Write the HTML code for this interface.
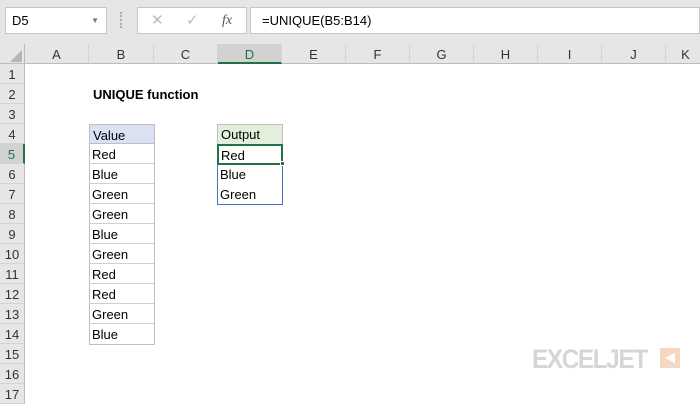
<!DOCTYPE html>
<html><head><style>
body{margin:0;width:700px;height:400px;overflow:hidden;background:#fff;font-family:"Liberation Sans",sans-serif;position:relative}
.a{position:absolute;box-sizing:border-box}
.ch{position:absolute;top:44px;height:20px;border-right:1px solid #d4d4d4;border-bottom:1px solid #bcbcbc;background:#e6e6e6;font-size:13px;color:#333;text-align:center;line-height:21px;box-sizing:border-box}
.rh{position:absolute;left:0;width:25px;height:20px;border-bottom:1px solid #d4d4d4;border-right:1px solid #bcbcbc;background:#e6e6e6;font-size:13px;color:#333;text-align:center;line-height:21px;box-sizing:border-box}
.c{position:absolute;font-size:13px;color:#000;line-height:22px;padding-left:3px;box-sizing:border-box;height:20px}
</style></head><body>
<div class="a" style="left:0;top:0;width:700px;height:44px;background:#e6e6e6"></div>
<div class="a" style="left:5px;top:7px;width:102px;height:27px;background:#fff;border:1px solid #c6c6c6;font-size:13px;line-height:25px;padding-left:6px">D5<span style="position:absolute;right:7px;top:0;font-size:8px;color:#777">▼</span></div>
<div class="a" style="left:120px;top:12px;width:2px;height:16px;border-left:2px dotted #aaa"></div>
<div class="a" style="left:137px;top:7px;width:110px;height:27px;background:#fff;border:1px solid #c6c6c6;color:#bbb;font-size:15px;line-height:25px"><span style="position:absolute;left:13px">✕</span><span style="position:absolute;left:48px">✓</span><span style="position:absolute;left:84px;color:#555;font-family:'Liberation Serif',serif;font-style:italic;font-size:14px">fx</span></div>
<div class="a" style="left:250px;top:7px;width:450px;height:27px;background:#fff;border:1px solid #c6c6c6;font-size:13px;line-height:25px;padding-left:11px">=UNIQUE(B5:B14)</div>
<div class="a" style="left:0;top:44px;width:25px;height:20px;background:#e6e6e6;border-right:1px solid #bcbcbc;border-bottom:1px solid #bcbcbc"></div>
<div class="a" style="left:10px;top:50px;width:0;height:0;border-left:12px solid transparent;border-bottom:12px solid #b5b5b5"></div>
<div class="ch" style="left:25px;width:64px">A</div>
<div class="ch" style="left:89px;width:65px">B</div>
<div class="ch" style="left:154px;width:64px">C</div>
<div class="ch" style="left:218px;width:64px;background:#d2d2d2;border-bottom:2px solid #217346;color:#217346">D</div>
<div class="ch" style="left:282px;width:64px">E</div>
<div class="ch" style="left:346px;width:64px">F</div>
<div class="ch" style="left:410px;width:64px">G</div>
<div class="ch" style="left:474px;width:64px">H</div>
<div class="ch" style="left:538px;width:64px">I</div>
<div class="ch" style="left:602px;width:64px">J</div>
<div class="ch" style="left:666px;width:40px">K</div>
<div class="rh" style="top:64px">1</div><div class="rh" style="top:84px">2</div><div class="rh" style="top:104px">3</div><div class="rh" style="top:124px">4</div>
<div class="rh" style="top:144px;background:#d2d2d2;color:#217346;border-right:2px solid #217346">5</div>
<div class="rh" style="top:164px">6</div><div class="rh" style="top:184px">7</div><div class="rh" style="top:204px">8</div><div class="rh" style="top:224px">9</div><div class="rh" style="top:244px">10</div><div class="rh" style="top:264px">11</div><div class="rh" style="top:284px">12</div><div class="rh" style="top:304px">13</div><div class="rh" style="top:324px">14</div><div class="rh" style="top:344px">15</div><div class="rh" style="top:364px">16</div><div class="rh" style="top:384px">17</div>
<div class="c" style="left:89px;top:84px;font-weight:bold;padding-left:4px">UNIQUE function</div>
<div class="a" style="left:89px;top:124px;width:66px;height:221px;border:1px solid #bfbfbf"></div>
<div class="c" style="left:90px;top:125px;width:64px;height:19px;background:#d9e1f2;border-bottom:1px solid #bfbfbf;line-height:21px">Value</div>
<div class="c" style="left:89px;top:144px;width:65px;border-bottom:1px solid #d0d0d0">Red</div>
<div class="c" style="left:89px;top:164px;width:65px;border-bottom:1px solid #d0d0d0">Blue</div>
<div class="c" style="left:89px;top:184px;width:65px;border-bottom:1px solid #d0d0d0">Green</div>
<div class="c" style="left:89px;top:204px;width:65px;border-bottom:1px solid #d0d0d0">Green</div>
<div class="c" style="left:89px;top:224px;width:65px;border-bottom:1px solid #d0d0d0">Blue</div>
<div class="c" style="left:89px;top:244px;width:65px;border-bottom:1px solid #d0d0d0">Green</div>
<div class="c" style="left:89px;top:264px;width:65px;border-bottom:1px solid #d0d0d0">Red</div>
<div class="c" style="left:89px;top:284px;width:65px;border-bottom:1px solid #d0d0d0">Red</div>
<div class="c" style="left:89px;top:304px;width:65px;border-bottom:1px solid #d0d0d0">Green</div>
<div class="c" style="left:89px;top:324px;width:65px">Blue</div>
<div class="c" style="left:217px;top:124px;width:66px;height:21px;background:#e2efda;border:1px solid #bfbfbf;line-height:20px">Output</div>
<div class="a" style="left:217px;top:144px;width:66px;height:61px;border:1px solid #4472c4"></div>
<div class="c" style="left:217px;top:144px;width:66px;height:21px;border:2px solid #217346;line-height:19px;padding-left:2px">Red</div>
<div class="a" style="left:280px;top:161px;width:5px;height:5px;background:#217346;border:1px solid #fff"></div>
<div class="c" style="left:217px;top:164px">Blue</div>
<div class="c" style="left:217px;top:184px">Green</div>
<div class="a" style="left:532px;top:342px;font-size:27px;font-weight:bold;color:#d6d6d6;letter-spacing:-1.5px;line-height:34px;transform:scaleX(0.9);transform-origin:left">EXCELJET</div>
<div class="a" style="left:660px;top:348px;width:20px;height:20px;background:#f6d8c2"><div class="a" style="left:5px;top:5px;width:0;height:0;border-right:10px solid #fff;border-top:5px solid transparent;border-bottom:5px solid transparent"></div></div>
</body></html>
